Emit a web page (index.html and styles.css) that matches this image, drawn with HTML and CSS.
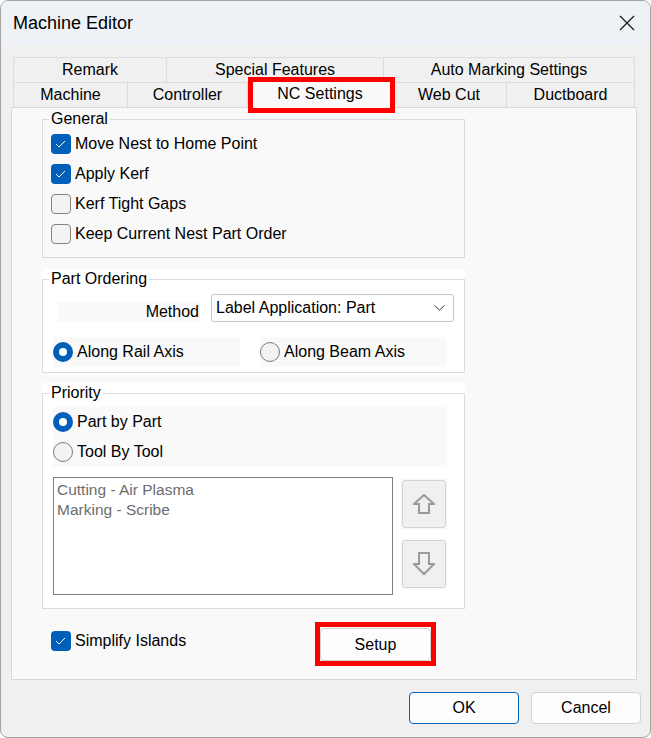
FILE: index.html
```html
<!DOCTYPE html>
<html lang="en">

<head>
    <meta charset="UTF-8">
    <meta name="viewport" content="width=device-width, initial-scale=1.0">
    <title>Machine Editor</title>
    <link rel="stylesheet" href="styles.css">
</head>

<body>
    <div class="window">
        <div class="titlebar">
            <span class="title">Machine Editor</span>
            <svg class="close" width="16" height="16" viewBox="0 0 16 16">
                <path d="M1 1 L15 15 M15 1 L1 15" stroke="#1b1b1b" stroke-width="1.3" fill="none" />
            </svg>
        </div>

        <div class="main">
            <div class="tabs">
                <div class="tab-row">
                    <div class="tab w-remark">Remark</div>
                    <div class="tab w-special">Special Features</div>
                    <div class="tab w-auto">Auto Marking Settings</div>
                </div>
                <div class="tab-row">
                    <div class="tab w-machine">Machine</div>
                    <div class="tab w-controller">Controller</div>
                    <div class="tab w-nc active">NC Settings</div>
                    <div class="tab w-webcut">Web Cut</div>
                    <div class="tab w-duct">Ductboard</div>
                </div>
            </div>

            <div class="page">
                <!-- General -->
                <fieldset class="group">
                    <legend>General</legend>
                    <label class="check"><span class="box checked"><svg width="20" height="20" viewBox="0 0 20 20"><polyline points="5,10 8,13 14,7" /></svg></span>Move Nest to Home Point</label>
                    <label class="check"><span class="box checked"><svg width="20" height="20" viewBox="0 0 20 20"><polyline points="5,10 8,13 14,7" /></svg></span>Apply Kerf</label>
                    <label class="check"><span class="box"></span>Kerf Tight Gaps</label>
                    <label class="check"><span class="box"></span>Keep Current Nest Part Order</label>
                </fieldset>

                <!-- Part Ordering -->
                <div class="group-bg ordering">
                    <fieldset class="group">
                        <legend>Part Ordering</legend>
                        <div class="method-row">
                            <span class="method-label">Method</span>
                            <div class="combo">
                                <span>Label Application: Part</span>
                                <svg width="11" height="6" viewBox="0 0 11 6">
                                    <polyline points="0.5,0.5 5.5,5 10.5,0.5" fill="none" stroke="#3a3a3a" stroke-width="1" />
                                </svg>
                            </div>
                        </div>
                        <div class="radio-row">
                            <label class="radio rail"><span class="dot on"></span>Along Rail Axis</label>
                            <label class="radio beam"><span class="dot"></span>Along Beam Axis</label>
                        </div>
                    </fieldset>
                </div>

                <!-- Priority -->
                <div class="group-bg priority">
                    <fieldset class="group">
                        <legend>Priority</legend>
                        <div class="radio-stack">
                            <label class="radio"><span class="dot on"></span>Part by Part</label>
                            <label class="radio"><span class="dot"></span>Tool By Tool</label>
                        </div>
                        <div class="list-row">
                            <div class="listbox">
                                <div>Cutting - Air Plasma</div>
                                <div>Marking - Scribe</div>
                            </div>
                            <div class="move-btns">
                                <div class="move-wrap">
                                    <button class="move">
                                        <svg width="22" height="20" viewBox="0 0 22 20">
                                            <polygon points="11,1 21,10 16,10 16,19 6,19 6,10 1,10" fill="none" stroke="#9a9a9a" stroke-width="2" stroke-linejoin="miter" />
                                        </svg>
                                    </button>
                                </div>
                                <div class="move-wrap">
                                    <button class="move">
                                        <svg width="22" height="24" viewBox="0 0 22 24">
                                            <polygon points="6,1 16,1 16,12 21,12 11,22 1,12 6,12" fill="none" stroke="#9a9a9a" stroke-width="2" stroke-linejoin="miter" />
                                        </svg>
                                    </button>
                                </div>
                            </div>
                        </div>
                    </fieldset>
                </div>

                <div class="bottom-row">
                    <label class="check simplify"><span class="box checked"><svg width="20" height="20" viewBox="0 0 20 20"><polyline points="5,10 8,13 14,7" /></svg></span>Simplify Islands</label>
                    <button class="btn setup">Setup</button>
                </div>
            </div>
        </div>

        <div class="footer">
            <button class="btn ok">OK</button>
            <button class="btn">Cancel</button>
        </div>
    </div>
</body>

</html>
```

FILE: styles.css
```css
* {
    box-sizing: border-box;
    margin: 0;
    padding: 0;
}

html,
body {
    background-color: #ffffff;
}

body {
    font-family: "Liberation Sans", Arial, sans-serif;
    font-size: 16px;
    color: #000000;
}

.window {
    width: 651px;
    height: 738px;
    display: flex;
    flex-direction: column;
    background-color: #f0f0f0;
    border: 1px solid #a4a4a4;
    border-radius: 8px;
    overflow: hidden;
}

/* title bar */
.titlebar {
    height: 44px;
    flex: none;
    display: flex;
    align-items: center;
    justify-content: space-between;
    padding: 0 15px 0 12px;
    background-color: #eef2f6;
}

.title {
    font-size: 18px;
    line-height: 20px;
}

/* tabs */
.main {
    flex: 1;
    display: flex;
    flex-direction: column;
    padding: 12px 13px 0 10px;
}

.tabs {
    margin: 0 2px;
}

.tab-row {
    display: flex;
    height: 25px;
}

.tab {
    height: 25px;
    border: 1px solid #dcdcdc;
    border-bottom: none;
    text-align: center;
    line-height: 24px;
    background-color: #f0f0f0;
    white-space: nowrap;
}

.tab + .tab {
    border-left: none;
}

.w-remark { width: 154px; }
.w-special { width: 217px; }
.w-auto { width: 251px; }
.w-machine { width: 115px; }
.w-controller { width: 120px; }
.w-nc { width: 144px; }
.w-webcut { width: 115px; }
.w-duct { width: 128px; }

.tab.active {
    position: relative;
    z-index: 1;
    height: 28px;
    margin-top: -2px;
    line-height: 26px;
    background-color: #f9f9f9;
    border-left: 1px solid #dcdcdc;
}

.tab.active + .tab {
    border-left: none;
}

/* red highlight round the selected tab */
.tab.active::after {
    content: '';
    position: absolute;
    left: -1px;
    right: -4px;
    top: -4px;
    bottom: -5px;
    border: 5px solid #ff0000;
}

/* tab page */
.page {
    flex: 1;
    background-color: #f9f9f9;
    border: 1px solid #d9d9d9;
    padding: 3px 0 0 30px;
}

.group {
    width: 423px;
    border: 1px solid #dcdcdc;
    padding: 2px 0 8px 0;
    min-inline-size: 0;
}

.group legend {
    margin-left: 6px;
    padding: 0 2px;
    line-height: 16px;
}

.group-bg {
    width: 423px;
    background-color: #ffffff;
    padding-top: 2px;
}

.ordering {
    margin-top: 11px;
}

.ordering .group {
    padding: 7px 0 5px 0;
}

.priority {
    margin-top: 10px;
}

.priority .group {
    padding: 6px 0 13px 0;
}

/* checkboxes */
.check {
    display: flex;
    align-items: center;
    height: 30px;
    padding-left: 8px;
}

.box {
    width: 20px;
    height: 20px;
    margin-right: 4px;
    border: 1px solid #838383;
    border-radius: 4px;
    background-color: #f3f3f3;
    flex: none;
}

.box.checked {
    border: none;
    background-color: #005fb8;
}

.box svg {
    display: block;
}

.box polyline {
    fill: none;
    stroke: #ffffff;
    stroke-width: 1;
}

/* method combo */
.method-row {
    display: flex;
    align-items: flex-end;
    height: 28px;
}

.method-label {
    width: 142px;
    height: 20px;
    margin-left: 15px;
    padding-right: 1px;
    line-height: 20px;
    text-align: right;
    background-color: #f9f9f9;
}

.combo {
    width: 243px;
    height: 28px;
    margin-left: 11px;
    display: flex;
    align-items: center;
    justify-content: space-between;
    padding: 0 8px 0 4px;
    border: 1px solid #c6c6c6;
    border-radius: 3px;
    background-color: #ffffff;
    line-height: 26px;
}

.combo svg {
    display: block;
    margin-top: -1px;
}

/* radios */
.radio-row {
    display: flex;
    margin-top: 15px;
}

.radio {
    display: flex;
    align-items: center;
    height: 30px;
    background-color: #f9f9f9;
}

.rail {
    width: 187px;
    margin-left: 10px;
}

.beam {
    width: 187px;
    margin-left: 20px;
}

.dot {
    width: 20px;
    height: 20px;
    margin-right: 4px;
    border: 1px solid #7c7c7c;
    border-radius: 50%;
    background-color: #f3f3f3;
    flex: none;
}

.dot.on {
    border: 6px solid #005fb8;
    background-color: #ffffff;
}

.radio-stack {
    width: 394px;
    margin-left: 10px;
    background-color: #f9f9f9;
}

/* list and move buttons */
.list-row {
    display: flex;
    margin-top: 10px;
}

.listbox {
    width: 340px;
    height: 118px;
    margin-left: 10px;
    padding: 2px 3px;
    border: 1px solid #7f7f7f;
    background-color: #ffffff;
    font-size: 15.5px;
    line-height: 20px;
    color: #6d6d6d;
}

.move-btns {
    display: flex;
    flex-direction: column;
    gap: 10px;
    margin: 2px 0 0 8px;
}

.move-wrap {
    width: 46px;
    height: 50px;
    padding: 1px;
    background-color: #f6f6f6;
}

.move {
    width: 44px;
    height: 48px;
    display: flex;
    align-items: center;
    justify-content: center;
    border: 1px solid #d2d2d2;
    border-radius: 4px;
    background-color: #f0f0f0;
}

.move svg {
    display: block;
}

/* bottom row */
.bottom-row {
    display: flex;
    align-items: flex-start;
    margin-top: 19px;
}

.simplify {
    width: 269px;
    height: 20px;
    margin: 3px 0 0 9px;
    padding-left: 0;
    flex: none;
}

.btn {
    font: inherit;
    color: #000000;
    background-color: #fdfdfd;
    border: 1px solid #d0d0d0;
    border-radius: 4px;
}

.setup {
    position: relative;
    width: 111px;
    height: 33px;
}

/* red highlight round the setup button */
.setup::after {
    content: '';
    position: absolute;
    left: -6px;
    right: -6px;
    top: -7px;
    bottom: -6px;
    border: 5px solid #ff0000;
}

/* dialog buttons */
.footer {
    height: 57px;
    flex: none;
    display: flex;
    justify-content: flex-end;
    gap: 12px;
    padding: 12px 9px 0 0;
}

.footer .btn {
    width: 110px;
    height: 32px;
}

.btn.ok {
    border-color: #005fb8;
}
```
